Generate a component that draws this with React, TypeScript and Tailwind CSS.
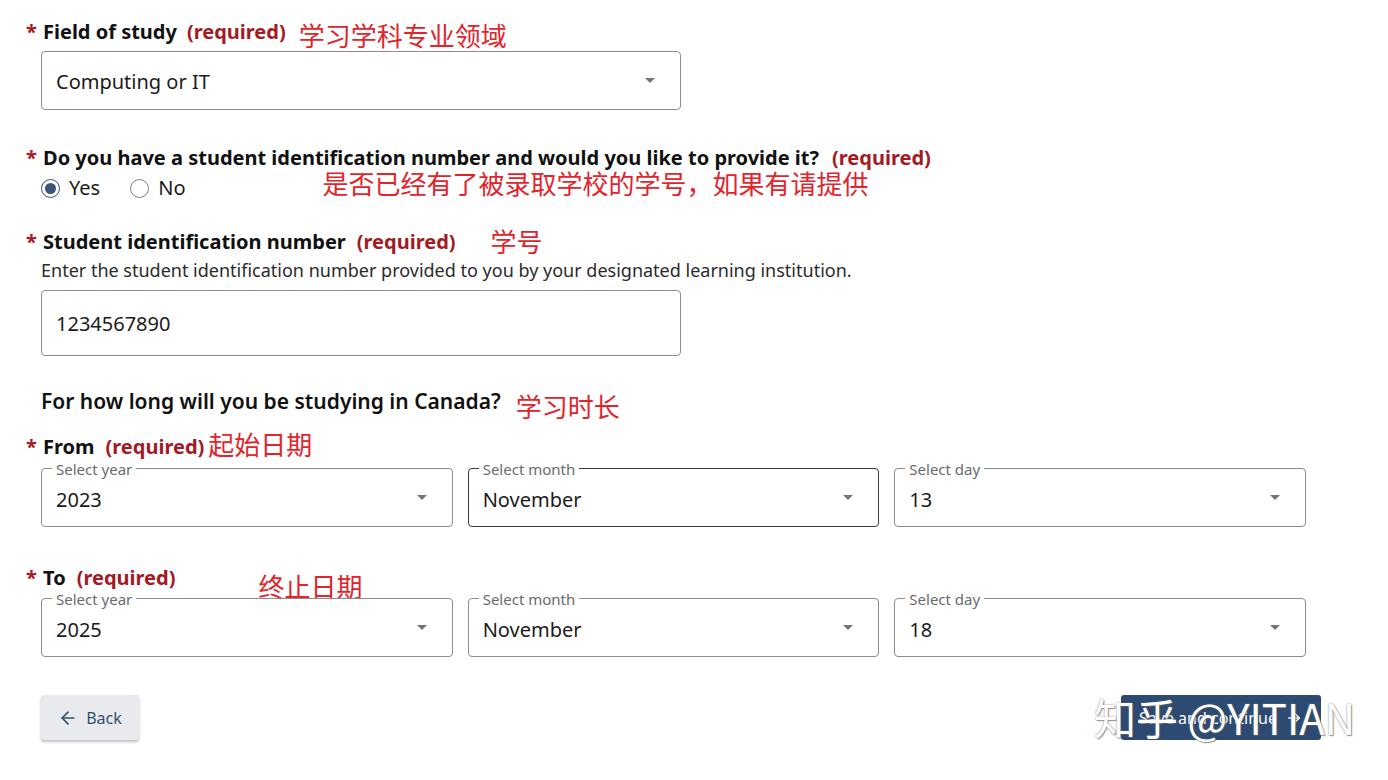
import { ArrowLeft, ArrowRight } from 'lucide-react';

const Required = ({ gap = 'ml-[11px]' }: { gap?: string }) => (
  <span className={`${gap} text-[#a31a24] font-bold`}>(required)</span>
);

const Note = ({ text, className = '' }: { text: string; className?: string }) => (
  <span
    className={`relative text-[26px] leading-none font-normal text-[#e2242c] font-['Noto_Sans_CJK_SC',sans-serif] ${className}`}
  >
    {text}
  </span>
);

const Caret = () => (
  <svg width="10" height="5" viewBox="0 0 10 5" className="shrink-0">
    <path d="M0 0 L10 0 L5 5 Z" fill="#757575" />
  </svg>
);

const Label = ({ children }: { children: React.ReactNode }) => (
  <div className="flex items-center h-6 -ml-[15px] text-[20px] font-bold text-[#111] whitespace-nowrap">
    <span className="w-[17px] text-[#a31a24]">*</span>
    {children}
  </div>
);

const DateField = ({ label, value, focused = false }: { label: string; value: string; focused?: boolean }) => (
  <div
    className={`relative h-[59px] rounded-[4px] border flex items-center justify-between pl-[14px] pr-[25px] ${
      focused ? 'border-[#3a3a3a]' : 'border-[#8d8d8d]'
    }`}
  >
    <span className="absolute -top-[10px] left-[10px] bg-white px-[4px] text-[15px] leading-[20px] text-[#6b6b6b]">
      {label}
    </span>
    <span className="text-[20px] text-[#1b1b1b] mt-[5px]">{value}</span>
    <Caret />
  </div>
);

const Radio = ({ checked, label }: { checked: boolean; label: string }) => (
  <label className="flex items-center gap-[9px]">
    <span
      className={`w-[19px] h-[19px] rounded-full border-[1.5px] flex items-center justify-center bg-white ${
        checked ? 'border-[#3b4f6b]' : 'border-[#808080]'
      }`}
    >
      {checked && <span className="w-[11px] h-[11px] rounded-full bg-[#3b5578]" />}
    </span>
    <span className="text-[20px] text-[#1b1b1b]">{label}</span>
  </label>
);

export default function App() {
  return (
    <div className="min-h-screen bg-white font-['Noto_Sans',sans-serif] text-[#1b1b1b] pl-[41px] pt-[20px]">
      {/* Field of study */}
      <Label>
        Field of study
        <Required gap="ml-[10px]" />
        <Note text="学习学科专业领域" className="ml-[13px] top-[3px]" />
      </Label>
      <div className="mt-[7px] w-[640px] h-[59px] rounded-[4px] border border-[#8d8d8d] flex items-center justify-between pl-[14px] pr-[25px]">
        <span className="text-[20px] mt-[3px]">Computing or IT</span>
        <Caret />
      </div>

      {/* Student ID question */}
      <div className="mt-[36px]">
        <Label>
          Do you have a student identification number and would you like to provide it?
          <Required gap="ml-[13px]" />
        </Label>
      </div>
      <div className="mt-[6px] h-6 flex items-center">
        <Radio checked label="Yes" />
        <div className="ml-[30px]">
          <Radio checked={false} label="No" />
        </div>
        <Note text="是否已经有了被录取学校的学号，如果有请提供" className="ml-[137px] -top-[5px]" />
      </div>

      {/* Student ID number */}
      <div className="mt-[30px]">
        <Label>
          Student identification number
          <Required />
          <Note text="学号" className="ml-[35px] -top-[1px]" />
        </Label>
      </div>
      <p className="mt-[5px] text-[18px] leading-[22px] text-[#2b2b2b]">
        Enter the student identification number provided to you by your designated learning institution.
      </p>
      <div className="mt-[9px] w-[640px] h-[66px] rounded-[4px] border border-[#8d8d8d] flex items-center pl-[14px]">
        <span className="text-[20px] mt-[1px]">1234567890</span>
      </div>

      {/* Duration */}
      <div className="mt-[32px] h-7 flex items-center">
        <h2 className="text-[21px] font-semibold text-[#111]">For how long will you be studying in Canada?</h2>
        <Note text="学习时长" className="ml-[15px] top-[4px]" />
      </div>

      <div className="mt-[19px]">
        <Label>
          From
          <Required />
          <Note text="起始日期" className="ml-[4px] -top-[3px]" />
        </Label>
      </div>
      <div className="mt-[9px] w-[1265px] grid grid-cols-3 gap-[15px]">
        <DateField label="Select year" value="2023" />
        <DateField label="Select month" value="November" focused />
        <DateField label="Select day" value="13" />
      </div>

      <div className="mt-[39px]">
        <Label>
          To
          <Required />
          <Note text="终止日期" className="ml-[83px] top-[8px]" />
        </Label>
      </div>
      <div className="mt-[8px] w-[1265px] grid grid-cols-3 gap-[15px]">
        <DateField label="Select year" value="2025" />
        <DateField label="Select month" value="November" />
        <DateField label="Select day" value="18" />
      </div>

      {/* Buttons */}
      <div className="mt-[38px] w-[1280px] flex justify-between">
        <button className="h-[45px] w-[98px] rounded-[3px] bg-[#e9eaee] shadow-[0_2px_3px_rgba(0,0,0,0.25)] flex items-center justify-center gap-[8px] text-[16px] text-[#34506f]">
          <ArrowLeft size={20} strokeWidth={2} />
          Back
        </button>
        <div className="relative">
          <button className="h-[45px] w-[200px] rounded-[3px] bg-[#2c4a72] flex items-center justify-center gap-[8px] text-[16px] text-white">
            Save and continue
            <ArrowRight size={18} strokeWidth={2} />
          </button>
          <span className="absolute -left-[27px] top-[1px] whitespace-nowrap text-[42px] leading-none text-white font-['Noto_Sans_CJK_SC',sans-serif] [text-shadow:0_0_2px_rgba(120,120,120,0.9),1px_1px_1px_rgba(90,90,90,0.6)] pointer-events-none">
            知乎 @YITIAN
          </span>
        </div>
      </div>
    </div>
  );
}
